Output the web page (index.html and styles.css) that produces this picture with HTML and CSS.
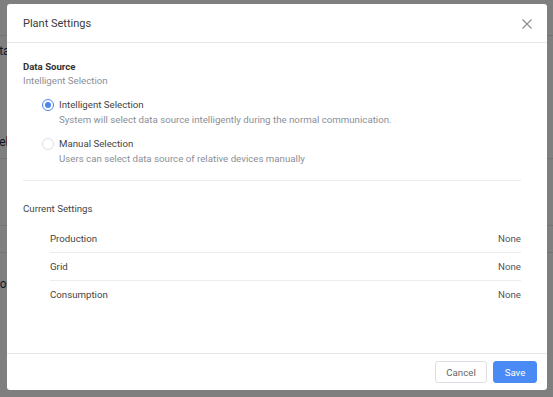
FILE: index.html
```html
<!DOCTYPE html>
<html>
<head>
<meta charset="utf-8">
<link rel="stylesheet" href="styles.css">
</head>
<body>
<div class="page">
  <div class="bg-row r1"><span>Stat</span></div>
  <div class="bg-row r2"><span>Selectio</span></div>
  <div class="bg-row r3"></div>
  <div class="bg-row r4"><span>Consum</span></div>
</div>
<div class="mask"></div>
<div class="modal">
  <div class="modal-header">
    <span class="modal-title">Plant Settings</span>
    <svg class="close" width="10" height="10" viewBox="0 0 10 10"><path d="M0.5 0.5L9.5 9.5M9.5 0.5L0.5 9.5" stroke="#8c8c8c" stroke-width="1.1" fill="none"/></svg>
  </div>
  <div class="modal-body">
    <div class="section-title">Data Source</div>
    <div class="section-sub">Intelligent Selection</div>
    <div class="options">
      <div class="option">
        <span class="radio checked"></span>
        <div class="option-text">
          <div class="option-label">Intelligent Selection</div>
          <div class="option-desc">System will select data source intelligently during the normal communication.</div>
        </div>
      </div>
      <div class="option">
        <span class="radio"></span>
        <div class="option-text">
          <div class="option-label">Manual Selection</div>
          <div class="option-desc">Users can select data source of relative devices manually</div>
        </div>
      </div>
    </div>
    <div class="divider"></div>
    <div class="current-title">Current Settings</div>
    <div class="settings">
      <div class="setting-row"><span>Production</span><span>None</span></div>
      <div class="setting-row"><span>Grid</span><span>None</span></div>
      <div class="setting-row"><span>Consumption</span><span>None</span></div>
    </div>
  </div>
  <div class="modal-footer">
    <button class="btn btn-cancel">Cancel</button>
    <button class="btn btn-save">Save</button>
  </div>
</div>
</body>
</html>
```
FILE: styles.css
```css
* { box-sizing: border-box; }
html, body { margin: 0; padding: 0; }
body {
  width: 553px;
  height: 397px;
  overflow: hidden;
  font-family: Roboto, "Liberation Sans", sans-serif;
  background: #ffffff;
  position: relative;
}
.page {
  display: flex;
  flex-direction: column;
  padding-top: 35px;
}
.bg-row {
  border-top: 1px solid #e4e4e4;
  font-size: 12px;
  color: #1a2f55;
  margin-left: -8px;
}
.r1 { height: 123px; padding-top: 8px; }
.r2 { height: 67px; }
.r3 { height: 27px; }
.r4 { height: 40px; padding-top: 24px; }
.r1 span { display: block; }
.r2 span { display: block; margin-top: -24px; }
.mask {
  position: absolute;
  inset: 0;
  background: rgba(0, 0, 0, 0.5);
}
.modal {
  position: absolute;
  left: 7px;
  top: 4px;
  width: 540px;
  height: 386px;
  background: #fff;
  border-radius: 3px;
  display: flex;
  flex-direction: column;
}
.modal-header {
  height: 39px;
  border-bottom: 1px solid #e8e8e8;
  display: flex;
  align-items: center;
  justify-content: space-between;
  padding: 0 15px 0 16px;
}
.modal-title {
  font-size: 11px;
  color: #3a3a3a;
}
.close { margin-top: 1px; }
.modal-body {
  flex: 1;
  padding: 17px 26px 0 16px;
}
.section-title {
  font-size: 9.6px;
  font-weight: 700;
  color: #333;
  line-height: 14px;
}
.section-sub {
  font-size: 9.7px;
  color: #8a8f99;
  line-height: 14px;
}
.options {
  padding: 10px 0 0 19px;
  display: flex;
  flex-direction: column;
  gap: 10px;
}
.option {
  display: flex;
  gap: 5px;
}
.radio {
  width: 12px;
  height: 12px;
  border-radius: 50%;
  border: 1px solid #dcdfe6;
  margin-top: 1px;
  position: relative;
  flex: none;
}
.radio.checked {
  border-color: #4a86f0;
}
.radio.checked::after {
  content: "";
  position: absolute;
  left: 2px;
  top: 2px;
  width: 6px;
  height: 6px;
  border-radius: 50%;
  background: #4a86f0;
}
.option-label {
  font-size: 9.7px;
  color: #444;
  line-height: 14px;
}
.option-desc {
  font-size: 9.7px;
  color: #8a8f99;
  line-height: 15px;
}
.divider {
  border-top: 1px solid #ececec;
  margin-top: 14px;
}
.current-title {
  font-size: 9.7px;
  color: #444;
  line-height: 14px;
  margin-top: 21px;
}
.settings {
  padding: 9px 0 0 27px;
}
.setting-row {
  display: flex;
  justify-content: space-between;
  font-size: 9.7px;
  color: #444;
  line-height: 14px;
  padding: 7px 0 6px;
  border-bottom: 1px solid #ececec;
}
.setting-row span:last-child { color: #555; }
.setting-row:last-child { border-bottom: none; }
.modal-footer {
  height: 37px;
  border-top: 1px solid #e8e8e8;
  display: flex;
  justify-content: flex-end;
  align-items: center;
  gap: 6px;
  padding: 0 10px 0 0;
}
.btn {
  font-family: Roboto, "Liberation Sans", sans-serif;
  font-size: 9.7px;
  height: 22px;
  border-radius: 3px;
  padding: 0;
  cursor: pointer;
}
.btn-cancel {
  background: #fff;
  border: 1px solid #dcdfe6;
  color: #666;
  width: 52px;
}
.btn-save {
  background: #4a8af5;
  border: 1px solid #4a8af5;
  color: #fff;
  width: 44px;
}
```
